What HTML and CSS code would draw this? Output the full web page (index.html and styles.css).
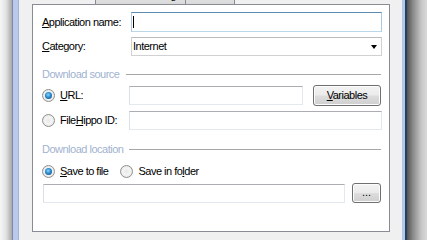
FILE: index.html
```html
<!DOCTYPE html>
<html>
<head>
<meta charset="utf-8">
<link rel="stylesheet" href="styles.css">
</head>
<body>
<div class="screen">
  <div class="shadow-l"></div>
  <div class="frame-l"></div>
  <div class="client">
    <div class="tabs">
      <div class="tab-gap"></div>
      <div class="tab tab-b">Download settings</div>
      <div class="tab tab-c">Advanced</div>
    </div>
    <div class="panel">
      <div class="row r-name">
        <span class="lbl lbl-wide"><u>A</u>pplication name:</span>
        <div class="input focus"><span class="caret"></span></div>
      </div>
      <div class="row r-cat">
        <span class="lbl lbl-wide"><u>C</u>ategory:</span>
        <div class="select"><span class="select-text">Internet</span><span class="arrow"></span></div>
      </div>
      <div class="group g-source">
        <span class="group-title">Download source</span><span class="group-line"></span>
      </div>
      <div class="row r-url">
        <div class="opt opt-col"><span class="radio on"></span><span class="lbl"><u>U</u>RL:</span></div>
        <div class="input flex-in gap-right"></div>
        <div class="btn btn-var"><u>V</u>ariables</div>
      </div>
      <div class="row r-fh">
        <div class="opt opt-col"><span class="radio"></span><span class="lbl">File<u>H</u>ippo ID:</span></div>
        <div class="input flex-in"></div>
      </div>
      <div class="group g-loc">
        <span class="group-title">Download location</span><span class="group-line"></span>
      </div>
      <div class="row r-save">
        <div class="opt"><span class="radio on"></span><span class="lbl"><u>S</u>ave to file</span></div>
        <div class="opt opt-second"><span class="radio"></span><span class="lbl">Save in fo<u>l</u>der</span></div>
      </div>
      <div class="row r-path">
        <div class="input flex-in path-in"></div>
        <div class="btn btn-dots">...</div>
      </div>
    </div>
  </div>
  <div class="frame-r"></div>
  <div class="shadow-r"></div>
</div>
</body>
</html>
```

FILE: styles.css
```css
* { box-sizing: border-box; }
html, body {
  margin: 0;
  padding: 0;
  width: 427px;
  height: 240px;
  overflow: hidden;
  background: #f0f0f0;
}
body {
  font-family: "Liberation Sans", Arial, sans-serif;
  font-size: 11px;
  letter-spacing: -0.5px;
  color: #000;
}
u { text-decoration: underline; text-underline-offset: 1px; }

.screen {
  display: flex;
  width: 427px;
  height: 240px;
}
.shadow-l {
  width: 12px;
  background: linear-gradient(to right, #f6f6f6 0%, #e2e2e2 50%, #a8a8a8 100%);
}
.frame-l {
  width: 7px;
  border-left: 1px solid #7d8ba6;
  border-right: 1px solid #a3b3d6;
  background: #bac8ec;
}
.client {
  flex: 1;
  background: #f0f0f0;
  padding: 0 12px 0 13px;
  display: flex;
  flex-direction: column;
}
.frame-r {
  width: 5px;
  border-right: 2px solid #21425f;
  background: #b7c5ea;
}
.shadow-r {
  width: 20px;
  background: linear-gradient(to right, #555 0%, #8a8a8a 30%, #c4c4c4 70%, #dadada 100%);
}

/* tabs */
.tabs {
  height: 5px;
  display: flex;
  align-items: flex-end;
  overflow: hidden;
  margin-bottom: -1px;
}
.tab-gap { width: 63px; }
.tab {
  height: 21px;
  flex: none;
  border: 1px solid #898c95;
  background: linear-gradient(to bottom, #f2f2f2, #d9d9d9);
  text-align: center;
  line-height: 14px;
  padding-top: 3px;
  color: #000;
}
.tab-b { width: 91px; }
.tab-c { width: 50px; margin-left: -1px; }

/* panel */
.panel {
  height: 228px;
  background: #fff;
  border: 1px solid #898c95;
  padding: 7px 7px 0 9px;
  display: flex;
  flex-direction: column;
}
.row {
  display: flex;
  align-items: center;
}
.lbl { white-space: nowrap; line-height: 13px; }
.lbl-wide { width: 89px; flex: none; }

.input {
  height: 19px;
  background: #fff;
  border: 1px solid #e3e9ef;
  border-top-color: #abadb3;
  border-left-color: #dbdfe6;
  position: relative;
}
.input.focus {
  flex: 1;
  height: 20px;
  border-color: #a9c9e4;
  border-top-color: #5e8bb0;
  border-bottom-color: #b9d6ea;
}
.caret {
  position: absolute;
  left: 1px;
  top: 3px;
  width: 1px;
  height: 12px;
  background: #000;
}
.flex-in { flex: 1; }
.gap-right { margin-right: 10px; }

.r-name { height: 20px; }
.r-cat { height: 19px; margin-top: 5px; }
.select {
  flex: 1;
  height: 19px;
  border: 1px solid #d1d1d1;
  border-top-color: #bcbcbc;
  background: #fff;
  display: flex;
  align-items: center;
  padding: 0 4px 0 1px;
}
.select-text { flex: 1; line-height: 13px; }
.arrow {
  width: 0;
  height: 0;
  border-left: 3.5px solid transparent;
  border-right: 3.5px solid transparent;
  border-top: 4px solid #000;
}

.group {
  display: flex;
  align-items: center;
  height: 14px;
}
.g-source { margin-top: 11px; }
.g-loc { margin-top: 12px; }
.group-title { color: #9fb3cf; white-space: nowrap; line-height: 13px; }
.group-line {
  flex: 1;
  margin-left: 6px;
  margin-right: 1px;
  border-top: 1px solid #a7a7a7;
}

.opt {
  display: flex;
  align-items: center;
  flex: none;
}
.opt-col { width: 87px; }
.opt-second { margin-left: 12px; }
.radio {
  width: 13px;
  height: 13px;
  border-radius: 50%;
  border: 1px solid #8e8f8f;
  background: radial-gradient(circle at 50% 50%, #e8e8e8 0%, #f4f4f4 45%, #dcdcdc 100%);
  margin-right: 5px;
  flex: none;
  position: relative;
}
.radio.on::after {
  content: "";
  position: absolute;
  left: 2px;
  top: 2px;
  width: 7px;
  height: 7px;
  border-radius: 50%;
  background: radial-gradient(circle at 45% 40%, #8fd6ff 0%, #2a8bd0 45%, #10406a 100%);
}

.r-url { height: 21px; margin-top: 4px; }
.r-fh { height: 19px; margin-top: 5px; margin-right: 0; }
.r-save { height: 14px; margin-top: 8px; }
.r-path { height: 20px; margin-top: 5px; }
.path-in { margin-left: 1px; margin-right: 7px; }

.btn {
  height: 21px;
  border: 1px solid #707070;
  border-radius: 3px;
  background: linear-gradient(to bottom, #f3f3f3 0%, #ebebeb 48%, #dddddd 52%, #cfcfcf 100%);
  box-shadow: inset 0 0 0 1px #fcfcfc;
  text-align: center;
  line-height: 19px;
  flex: none;
}
.btn-var { width: 68px; margin-right: 1px; }
.btn-dots { width: 29px; height: 20px; line-height: 16px; margin-right: 1px; letter-spacing: 0; }
```
